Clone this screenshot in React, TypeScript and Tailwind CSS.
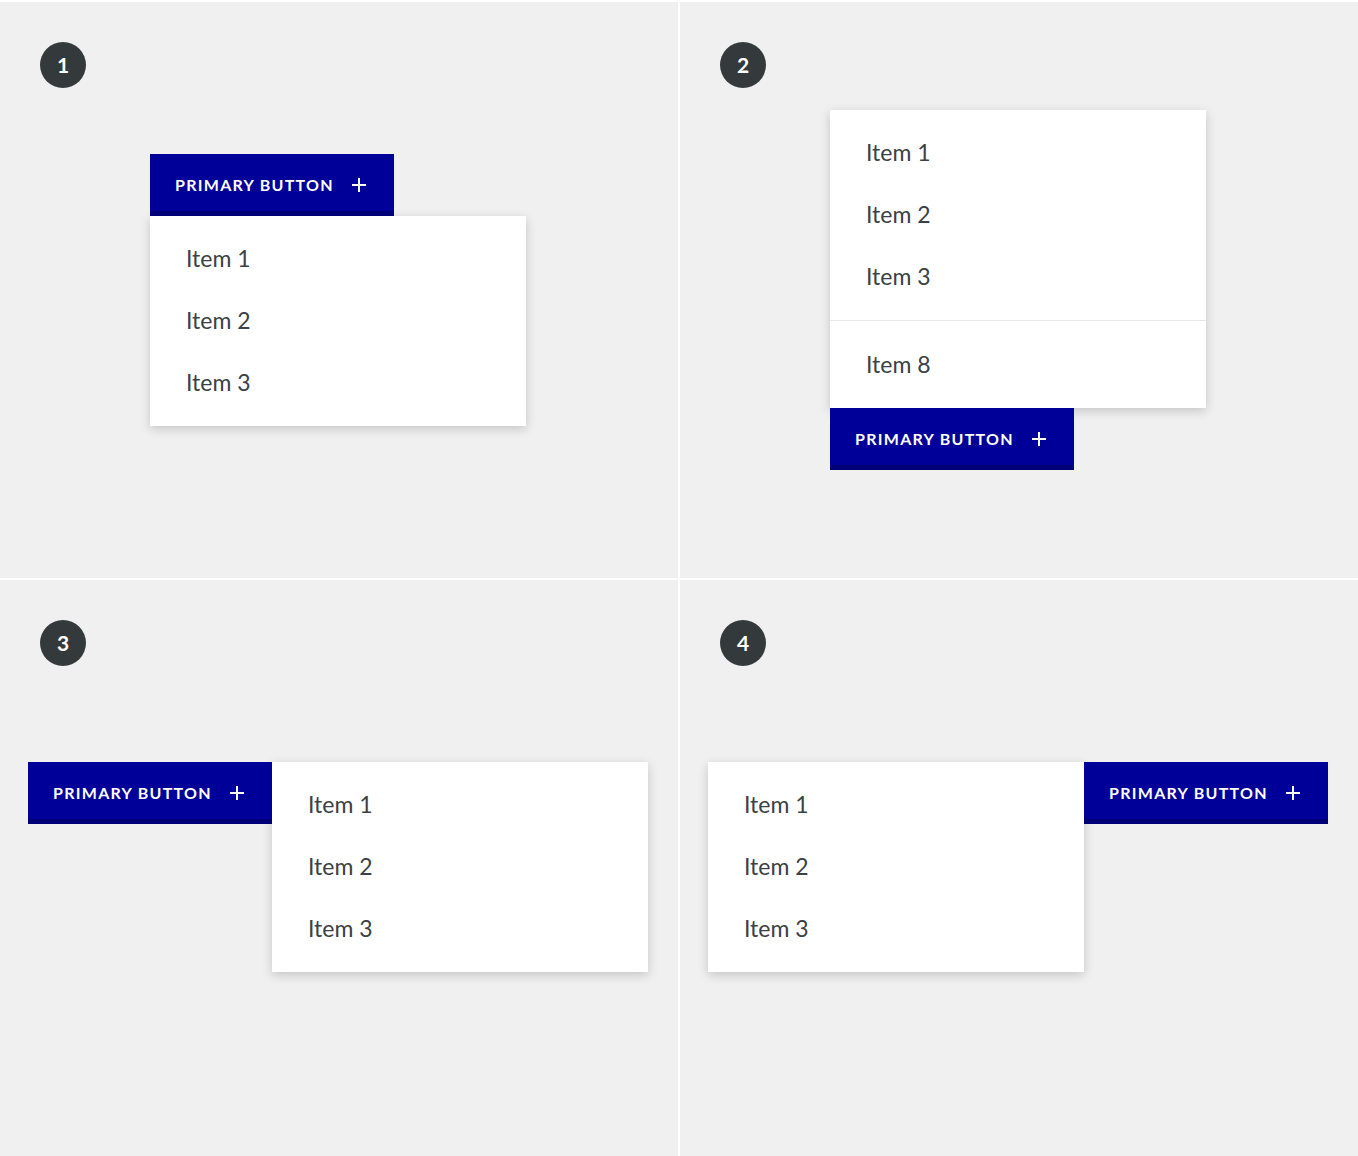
import React from 'react';

const font = { fontFamily: 'Lato, "Noto Sans", sans-serif' };

function Badge({ n }: { n: number }) {
  return (
    <div className="ml-10 mt-10 flex h-[46px] w-[46px] shrink-0 items-center justify-center rounded-full bg-[#343a3c] text-[21px] font-bold text-white">
      {n}
    </div>
  );
}

function PrimaryButton() {
  return (
    <button
      type="button"
      className="relative z-10 flex h-[62px] w-[244px] shrink-0 items-center gap-[17px] bg-[#000099] pl-[25px] text-[16px] font-bold uppercase tracking-[0.08em] text-white shadow-[inset_0_-5px_0_rgba(0,0,0,0.22)]"
    >
      <span>Primary Button</span>
      <svg width="16" height="16" viewBox="0 0 16 16" fill="none" stroke="currentColor" strokeWidth="2">
        <path d="M8 1v14M1 8h14" />
      </svg>
    </button>
  );
}

function Item({ label }: { label: string }) {
  return (
    <div className="flex h-[62px] items-center pl-[36px] text-[23px] text-[#3b4144]">
      {label}
    </div>
  );
}

function Menu({ extra = false }: { extra?: boolean }) {
  return (
    <div className="w-[376px] shrink-0 bg-white shadow-[0_3px_10px_rgba(0,0,0,0.18)]">
      <div className="pb-[13px] pt-[11px]">
        <Item label="Item 1" />
        <Item label="Item 2" />
        <Item label="Item 3" />
      </div>
      {extra && (
        <div className="border-t border-[#e8e8e8] pb-[13px] pt-3">
          <Item label="Item 8" />
        </div>
      )}
    </div>
  );
}

export default function App() {
  return (
    <div className="grid h-[1156px] w-[1358px] grid-cols-[678px_678px] grid-rows-[576px_576px] gap-[2px] bg-white pt-[2px]" style={font}>
      <section className="flex flex-col bg-[#f0f0f0]">
        <Badge n={1} />
        <div className="ml-[150px] mt-[66px] flex flex-col items-start">
          <PrimaryButton />
          <Menu />
        </div>
      </section>

      <section className="flex flex-col bg-[#f0f0f0]">
        <Badge n={2} />
        <div className="ml-[150px] mt-[22px] flex flex-col items-start">
          <Menu extra />
          <PrimaryButton />
        </div>
      </section>

      <section className="flex flex-col bg-[#f0f0f0]">
        <Badge n={3} />
        <div className="ml-[28px] mt-[96px] flex items-start">
          <PrimaryButton />
          <Menu />
        </div>
      </section>

      <section className="flex flex-col bg-[#f0f0f0]">
        <Badge n={4} />
        <div className="ml-[28px] mt-[96px] flex items-start">
          <Menu />
          <PrimaryButton />
        </div>
      </section>
    </div>
  );
}
